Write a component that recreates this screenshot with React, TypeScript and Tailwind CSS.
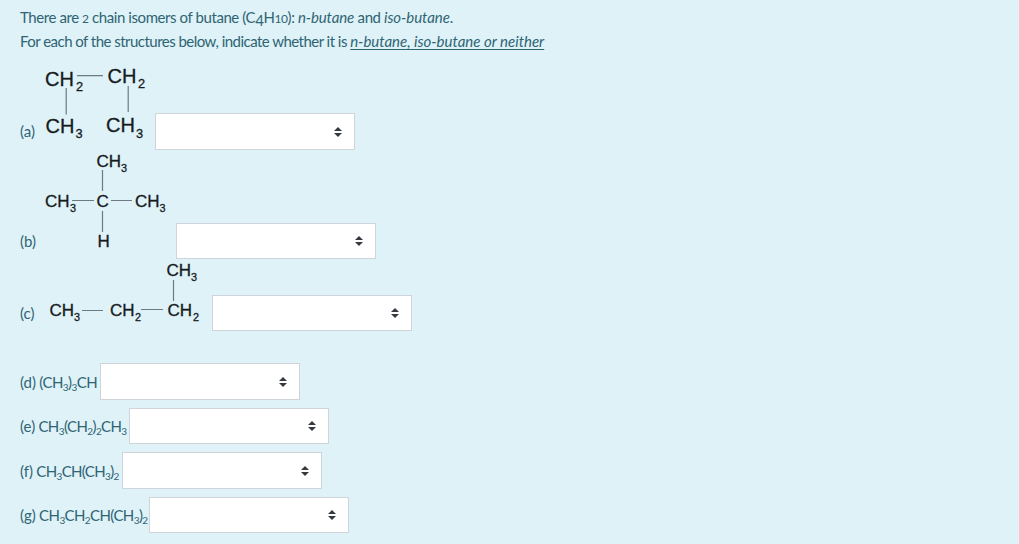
import React from 'react';

interface FormulaProps {
  x: number;
  y: number;
  size?: number;
  text?: string;
  sub?: string;
  subX?: number;
  subY?: number;
}

// Atom group such as CH3, with its subscript placed separately
function Group({ x, y, size = 17, text = 'CH', sub, subX = x + 25, subY = y + 4.5 }: FormulaProps) {
  return (
    <>
      <text x={x} y={y} fontSize={size}>{text}</text>
      {sub && <text x={subX} y={subY} fontSize={size * 0.64}>{sub}</text>}
    </>
  );
}

interface DrawingProps {
  viewBox: string;
  width: number;
  height: number;
  bonds: string;
  children: React.ReactNode;
}

function Drawing({ viewBox, width, height, bonds, children }: DrawingProps) {
  return (
    <svg
      viewBox={viewBox}
      width={width}
      height={height}
      className="block shrink-0 font-['Liberation_Sans',Arial,sans-serif]"
      fill="#161b1d"
      stroke="#161b1d"
      strokeWidth={0.3}
    >
      <path d={bonds} fill="none" stroke="#6d7a80" strokeWidth={1.2} />
      {children}
    </svg>
  );
}

function AnswerSelect({ className = 'h-9' }: { className?: string }) {
  return (
    <button type="button" className={`flex w-[200px] shrink-0 items-center justify-end border border-[#ced4da] bg-white pr-[12px] ${className}`}>
      <svg width="8" height="10" viewBox="0 0 8 10" fill="#343a40">
        <path d="M4 0 8 4H0zM4 10 0 6h8z" />
      </svg>
    </button>
  );
}

function Sub({ children }: { children: React.ReactNode }) {
  return <span className="relative top-[3px] text-[10px]">{children}</span>;
}

const condensed = [
  { id: 'd', width: 'w-[80px]', height: 'h-[37px]', spacing: 'tracking-[-0.55px]', formula: <>(CH<Sub>3</Sub>)<Sub>3</Sub>CH</> },
  { id: 'e', width: 'w-[109px]', height: 'h-9', spacing: 'tracking-[-0.6px]', formula: <>CH<Sub>3</Sub>(CH<Sub>2</Sub>)<Sub>2</Sub>CH<Sub>3</Sub></> },
  { id: 'f', width: 'w-[102px]', height: 'h-[37px]', spacing: 'tracking-[-0.65px]', formula: <>CH<Sub>3</Sub>CH(CH<Sub>3</Sub>)<Sub>2</Sub></> },
  { id: 'g', width: 'w-[129px]', height: 'h-9', spacing: 'tracking-[-0.6px]', formula: <>CH<Sub>3</Sub>CH<Sub>2</Sub>CH(CH<Sub>3</Sub>)<Sub>2</Sub></> },
];

export default function App() {
  return (
    <div className="h-[544px] w-full overflow-hidden bg-[#def2f8] px-5 pt-[5px] font-['Lato','Open_Sans',sans-serif] text-[15px] text-[#2f6473]">
      <p className="h-6 whitespace-nowrap leading-6 tracking-[-0.42px]">
        There are <span className="text-[12px]">2</span> chain isomers of butane (C<span className="relative top-[3px]">4</span>H<span className="text-[12px]">10</span>):{' '}
        <em className="tracking-[-0.1px]">n-butane</em> and <em className="tracking-[-0.05px]">iso-butane</em>.
      </p>
      <p className="h-[25px] whitespace-nowrap leading-6 tracking-[-0.53px]">
        For each of the structures below, indicate whether it is{' '}
        <em className="tracking-[0px] underline underline-offset-2">n-butane, iso-butane or neither</em>
      </p>

      {/* Structural formulas */}
      <div className="flex h-24 items-end">
        <span className="w-5 shrink-0 pb-[9px] leading-5">(a)</span>
        <Drawing viewBox="40 54 115 96" width={115} height={96} bonds="M77 75.7H103M66.2 88V114.5M128.2 86V112">
          <Group x={45} y={85.5} size={20} sub="2" subX={76} subY={91} />
          <Group x={107.5} y={83} size={20} sub="2" subX={138} subY={88} />
          <Group x={45.5} y={132.5} size={20} sub="3" subX={75.5} subY={138} />
          <Group x={106} y={132} size={20} sub="3" subX={136} subY={138} />
        </Drawing>
        <AnswerSelect className="h-[37px]" />
      </div>

      <div className="flex h-[109px] items-end">
        <span className="w-5 shrink-0 pb-2 leading-5">(b)</span>
        <Drawing viewBox="40 150 136 109" width={136} height={109} bonds="M102.5 170V191M72 200.5H94M111 200.5H132M102.5 211V232">
          <Group x={96.5} y={167} sub="3" subX={121} subY={171.5} />
          <Group x={45} y={207} sub="3" subX={70} />
          <Group x={96.5} y={207} text="C" />
          <Group x={135} y={207} sub="3" subX={159.5} subY={212} />
          <Group x={97.5} y={247} text="H" />
        </Drawing>
        <AnswerSelect />
      </div>

      <div className="flex h-[72px] items-end">
        <span className="w-5 shrink-0 pb-2 leading-5">(c)</span>
        <Drawing viewBox="40 259 172 72" width={172} height={72} bonds="M82 310.5H103M141 309.5H163M173.5 280V301">
          <Group x={166.5} y={276} sub="3" subX={191} subY={281} />
          <Group x={49.5} y={316} sub="3" subX={74} />
          <Group x={110} y={316} sub="2" subX={135} />
          <Group x={167.5} y={316} sub="2" subX={193} />
        </Drawing>
        <AnswerSelect />
      </div>

      {/* Condensed formulas */}
      <div className="mt-8 space-y-2">
        {condensed.map(row => (
          <div key={row.id} className="flex items-center">
            <span className={`${row.width} ${row.spacing} shrink-0 whitespace-nowrap pt-0.5 leading-5`}>
              <span className="tracking-normal">({row.id})</span> {row.formula}
            </span>
            <AnswerSelect className={row.height} />
          </div>
        ))}
      </div>
    </div>
  );
}
